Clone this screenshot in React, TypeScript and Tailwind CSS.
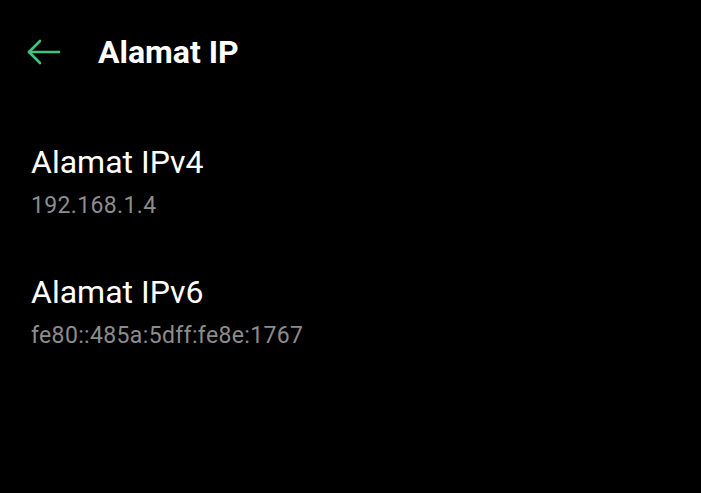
import React from "react";

export default function App() {
  return (
    <div className="w-[701px] h-[493px] bg-black text-white overflow-hidden" style={{ fontFamily: "Roboto, 'Noto Sans', sans-serif" }}>
      <div className="flex items-center h-[56px] mt-[24px]">
        <svg width="34" height="26" viewBox="0 0 34 26" className="ml-[27px]" fill="none" stroke="#3ec47c" strokeWidth="2.6" strokeLinecap="round" strokeLinejoin="round">
          <path d="M2 13 H32" />
          <path d="M13 2 L2 13 L13 24" />
        </svg>
        <div className="ml-[37px] text-[32px] font-bold leading-none">Alamat IP</div>
      </div>
      <div className="pl-[31px] mt-[64px]">
        <div className="text-[32px] leading-[36px]">Alamat IPv4</div>
        <div className="text-[23px] leading-[28px] text-[#8c8c8c] mt-[12px] tracking-[0.35px]">192.168.1.4</div>
      </div>
      <div className="pl-[31px] mt-[54px]">
        <div className="text-[32px] leading-[36px]">Alamat IPv6</div>
        <div className="text-[23px] leading-[28px] text-[#8c8c8c] mt-[12px] tracking-[0.35px]">fe80::485a:5dff:fe8e:1767</div>
      </div>
    </div>
  );
}
